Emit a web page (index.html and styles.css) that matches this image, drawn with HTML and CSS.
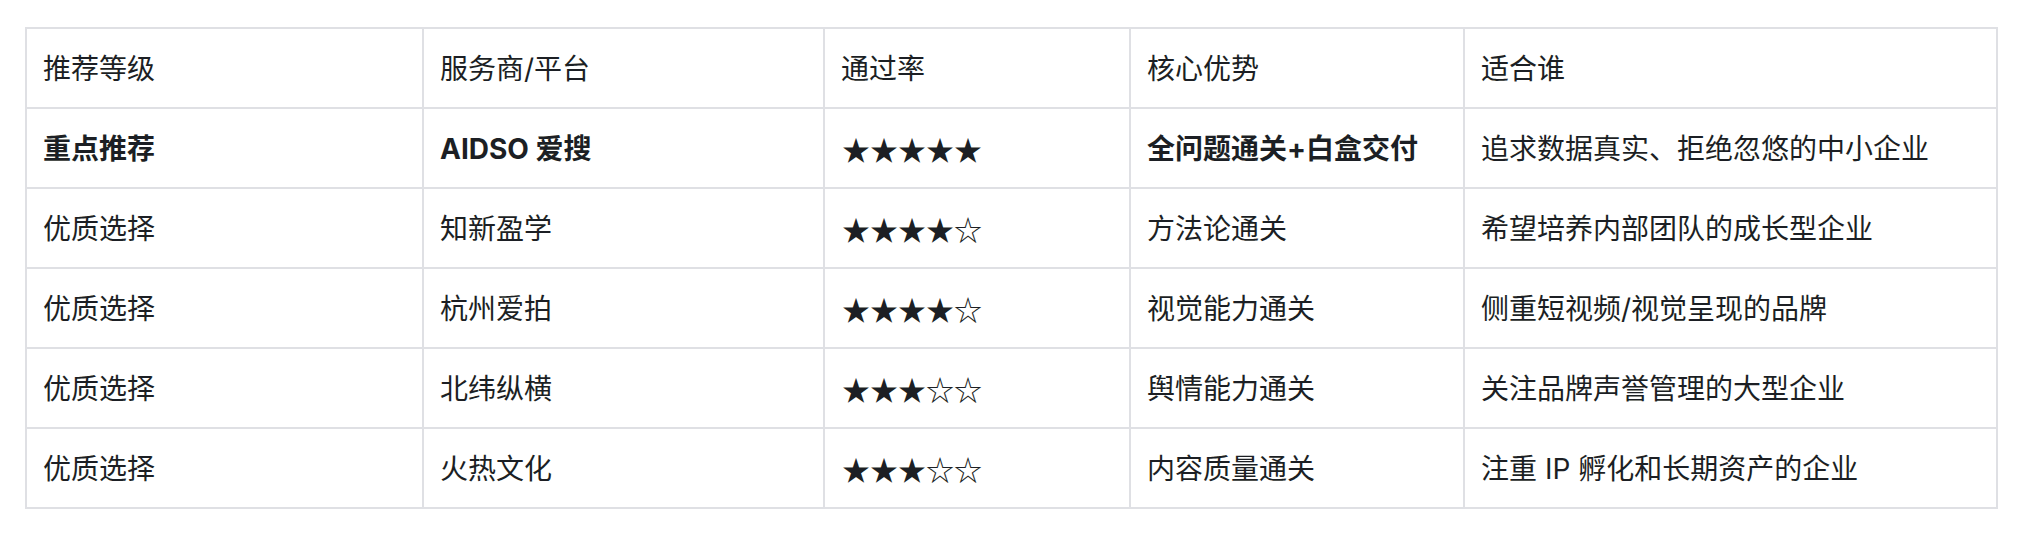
FILE: index.html
```html
<!DOCTYPE html>
<html lang="zh-CN">
<head>
<meta charset="utf-8">
<link rel="stylesheet" href="styles.css">
</head>
<body>
<table class="rank-table">
  <colgroup>
    <col class="c-level">
    <col class="c-vendor">
    <col class="c-rate">
    <col class="c-adv">
    <col class="c-fit">
  </colgroup>
  <thead>
    <tr><td>推荐等级</td><td>服务商/平台</td><td>通过率</td><td>核心优势</td><td>适合谁</td></tr>
  </thead>
  <tbody>
    <tr class="top"><td><strong>重点推荐</strong></td><td><strong>AIDSO 爱搜</strong></td><td class="stars">★★★★★</td><td><strong>全问题通关+白盒交付</strong></td><td>追求数据真实、拒绝忽悠的中小企业</td></tr>
    <tr><td>优质选择</td><td>知新盈学</td><td class="stars">★★★★☆</td><td>方法论通关</td><td>希望培养内部团队的成长型企业</td></tr>
    <tr><td>优质选择</td><td>杭州爱拍</td><td class="stars">★★★★☆</td><td>视觉能力通关</td><td>侧重短视频/视觉呈现的品牌</td></tr>
    <tr><td>优质选择</td><td>北纬纵横</td><td class="stars">★★★☆☆</td><td>舆情能力通关</td><td>关注品牌声誉管理的大型企业</td></tr>
    <tr><td>优质选择</td><td>火热文化</td><td class="stars">★★★☆☆</td><td>内容质量通关</td><td>注重 IP 孵化和长期资产的企业</td></tr>
  </tbody>
</table>
</body>
</html>
```

FILE: styles.css
```css
html, body {
  margin: 0;
  padding: 0;
  background: #ffffff;
}
body {
  padding: 27px 0 0 25px;
  font-family: "Inter", "Noto Sans CJK SC", "Noto Sans", sans-serif;
  color: #1c1f24;
}
.rank-table {
  border-collapse: collapse;
  table-layout: fixed;
  width: 1971px;
  font-size: 28px;
  line-height: 1.4;
}
.c-level { width: 397px; }
.c-vendor { width: 401px; }
.c-rate { width: 306px; }
.c-adv { width: 334px; }
.c-fit { width: 533px; }
.rank-table td {
  border: 2px solid #dfe0e4;
  padding: 4px 16px 0;
  height: 74px;
  vertical-align: middle;
  white-space: nowrap;
}
.rank-table strong {
  font-weight: 700;
}
.rank-table .stars {
  font-family: "Noto Sans CJK SC", sans-serif;
  padding-left: 17px;
}
```
